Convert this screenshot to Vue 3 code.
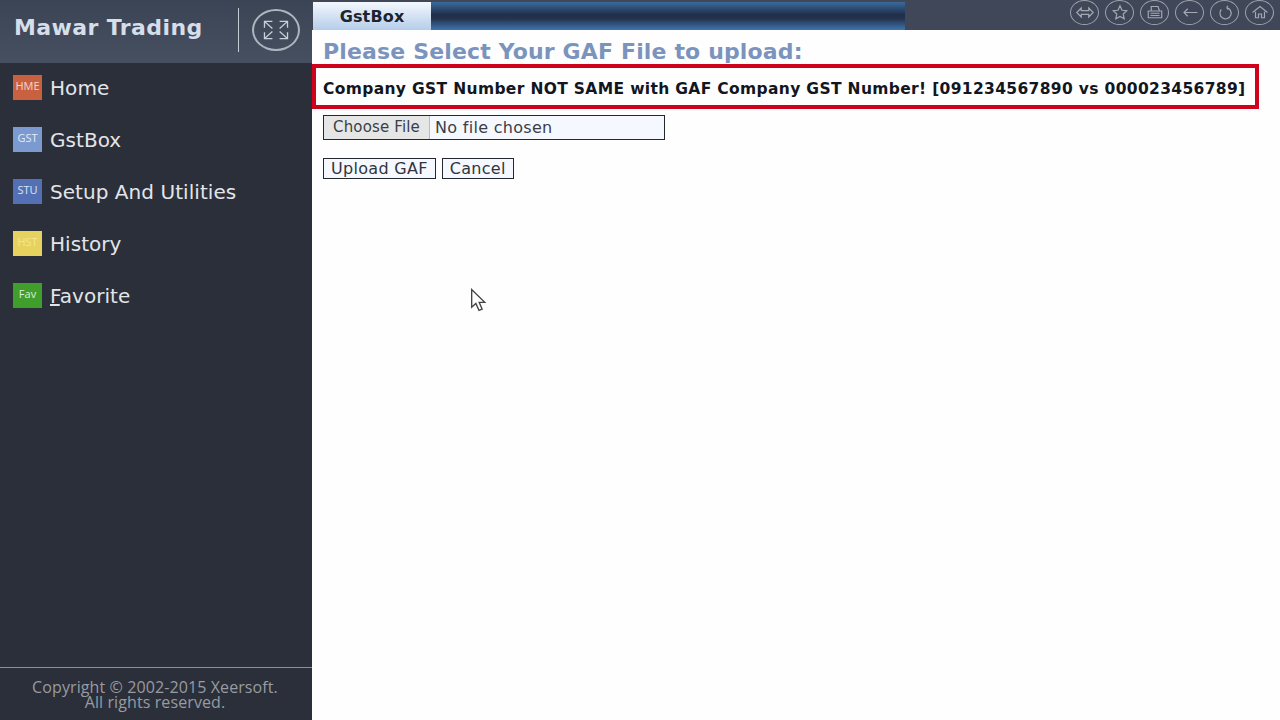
<script setup>
const menu = [
  { code: 'HME', label: 'Home', color: '#c9603f', ink: '#f0d9cf' },
  { code: 'GST', label: 'GstBox', color: '#7b9ad0', ink: '#e3eaf5' },
  { code: 'STU', label: 'Setup And Utilities', color: '#5470b4', ink: '#dfe5f2' },
  { code: 'HST', label: 'History', color: '#e8d25f', ink: '#f4e68f' },
  { code: 'Fav', label: 'avorite', first: 'F', color: '#3f9e2c', ink: '#dcefd8' },
]
</script>

<template>
  <div class="app">
    <aside class="side">
      <header class="brand">
        <h1 class="brand-name">Mawar Trading</h1>
        <span class="brand-rule"></span>
        <span class="expand">
          <svg viewBox="0 0 50 44" width="36" height="32" fill="none" stroke="#c9d0d9" stroke-width="1.800">
            <path d="M20 10H9V19M9 10L20 20M30 10H41V19M41 10L30 20M20 34H9V25M9 34L20 24M30 34H41V25M41 34L30 24" />
          </svg>
        </span>
      </header>
      <nav class="menu">
        <a v-for="m in menu" :key="m.code" class="item">
          <span class="code" :style="{ background: m.color, color: m.ink }">{{ m.code }}</span>
          <span class="label"><u v-if="m.first">{{ m.first }}</u>{{ m.label }}</span>
        </a>
      </nav>
      <footer class="copy">Copyright © 2002-2015 Xeersoft.<br />All rights reserved.</footer>
    </aside>

    <main class="main">
      <div class="top">
        <div class="tab">GstBox</div>
        <div class="strip"></div>
        <div class="tools">
          <span class="tool"><svg viewBox="0 0 28 28"><path d="M9 8L3 14L9 20V16.500H19V20L25 14L19 8V11.500H9Z" /></svg></span>
          <span class="tool"><svg viewBox="0 0 28 28"><path d="M14 5L16.700 11L23 11.700L18.300 16L19.600 22.500L14 19.200L8.400 22.500L9.700 16L5 11.700L11.300 11Z" /></svg></span>
          <span class="tool"><svg viewBox="0 0 28 28"><path d="M9 12V6H18L20 12M5 12H23V21H5ZM8 15H20M8 18H20" /></svg></span>
          <span class="tool"><svg viewBox="0 0 28 28"><path d="M6 14H24M11 9L6 14L11 19" /></svg></span>
          <span class="tool"><svg viewBox="0 0 28 28"><path d="M16 7.500A7.500 7.500 0 1 1 9 10M16 7.500L18 5M16 7.500L18.500 10" /></svg></span>
          <span class="tool"><svg viewBox="0 0 28 28"><path d="M4 14L14 6L24 14M8 13V21H12V16H16V21H20V13" /></svg></span>
        </div>
      </div>
      <section class="content">
        <h2 class="heading">Please Select Your GAF File to upload:</h2>
        <div class="error">Company GST Number NOT SAME with GAF Company GST Number! [091234567890 vs 000023456789]</div>
        <div class="file">
          <button class="choose">Choose File</button>
          <span class="none">No file chosen</span>
        </div>
        <div class="actions">
          <button class="btn">Upload GAF</button>
          <button class="btn">Cancel</button>
        </div>
      </section>
      <svg class="cursor" viewBox="0 0 18 24" width="19" height="25">
        <path d="M1.500 1.500V18.500L5.500 14.800L8.500 21.500L11.500 20.200L8.700 13.800H14Z" fill="#fff" stroke="#444" stroke-width="1.300" />
      </svg>
    </main>
  </div>
</template>

<style scoped>
.app {
  display: flex;
  width: 1280px;
  height: 720px;
  overflow: hidden;
  background: #fefefe;
  font-family: "DejaVu Sans", Verdana, sans-serif;
}
.side {
  width: 312px;
  flex: none;
  display: flex;
  flex-direction: column;
  background: #2b2f3a;
  color: #e4e6ea;
}
.brand {
  height: 63px;
  flex: none;
  display: flex;
  align-items: center;
  padding-left: 14px;
  box-sizing: border-box;
  background: linear-gradient(#3b4454, #465061);
}
.brand-name {
  margin: 0 0 9px;
  width: 224px;
  font-size: 22px;
  letter-spacing: 0.400px;
  font-weight: 700;
  color: #d6deea;
  white-space: nowrap;
}
.brand-rule {
  width: 1px;
  height: 44px;
  margin-bottom: 4px;
  background: #c5cbd3;
}
.expand {
  width: 48px;
  height: 42px;
  margin: 0 0 4px 13px;
  border: 2px solid #aeb5bf;
  border-radius: 50%;
  display: flex;
  align-items: center;
  justify-content: center;
  box-sizing: border-box;
}
.menu {
  flex: 1;
}
.item {
  height: 52px;
  display: flex;
  align-items: center;
  padding-left: 13px;
  gap: 8px;
}
.code {
  width: 29px;
  height: 25px;
  margin-bottom: 4px;
  display: flex;
  align-items: center;
  justify-content: center;
  padding-bottom: 3px;
  box-sizing: border-box;
  font-family: "Open Sans", sans-serif;
  font-size: 11px;
}
.label {
  margin-bottom: 2px;
  font-size: 20px;
  letter-spacing: 0.050px;
  color: #e3e5e8;
  white-space: nowrap;
}
.copy {
  height: 53px;
  flex: none;
  border-top: 1px solid #8b8f97;
  box-sizing: border-box;
  padding: 12px 2px 0 0;
  text-align: center;
  font-family: "Open Sans", sans-serif;
  font-size: 16px;
  letter-spacing: 0.100px;
  line-height: 15px;
  color: #989ba1;
}
.main {
  flex: 1;
  position: relative;
  min-width: 0;
}
.top {
  height: 30px;
  display: flex;
  align-items: flex-end;
  background: #3f4759;
  padding-left: 1px;
}
.tab {
  width: 118px;
  height: 28px;
  box-sizing: border-box;
  display: flex;
  align-items: center;
  justify-content: center;
  background: linear-gradient(#f4f8fd, #b5cdea);
  font-size: 16px;
  letter-spacing: 0.150px;
  font-weight: 700;
  color: #1c2430;
}
.strip {
  width: 474px;
  height: 28px;
  background: linear-gradient(#3a6a9c, #1f2f4a 45%, #24344f 60%, #3e74ae);
}
.tools {
  margin-left: auto;
  height: 30px;
  display: flex;
  gap: 6px;
  padding: 0 6px 0 0;
  box-sizing: border-box;
}
.tool {
  width: 29px;
  height: 25px;
  border: 1.500px solid #9da2ad;
  border-radius: 50%;
  box-sizing: border-box;
  display: flex;
  align-items: center;
  justify-content: center;
}
.tool svg {
  width: 22px;
  height: 21px;
  fill: none;
  stroke: #a3a8b2;
  stroke-width: 1.600;
}
.heading {
  margin: 9px 0 0 11px;
  font-size: 22px;
  letter-spacing: 0.150px;
  line-height: 26px;
  font-weight: 700;
  color: #7a94bd;
  white-space: nowrap;
}
.error {
  height: 45px;
  margin: -1px 21px 0 0;
  border: 4px solid #d0021b;
  box-sizing: border-box;
  padding: 4px 0 0 7px;
  display: flex;
  align-items: center;
  font-size: 15.500px;
  letter-spacing: 0.340px;
  font-weight: 700;
  color: #11161f;
  white-space: nowrap;
}
.file {
  width: 342px;
  height: 25px;
  margin: 6px 0 0 11px;
  border: 1px solid #23272e;
  box-sizing: border-box;
  display: flex;
  align-items: center;
  background: #f5f8fe;
  font-size: 16px;
  letter-spacing: 0.300px;
  color: #3a3f47;
}
.choose {
  height: 100%;
  width: 106px;
  padding: 0 0 1px;
  border: 0;
  border-right: 1px solid #bbb;
  background: #e6e6e6;
  font-family: inherit;
  font-size: 15px;
  letter-spacing: 0.150px;
  color: #3a3f47;
}
.none {
  margin: 0 0 1px 5px;
}
.actions {
  display: flex;
  gap: 6px;
  margin: 18px 0 0 11px;
}
.btn {
  height: 21px;
  padding: 0 7px;
  border: 1px solid #23272e;
  background: #f5f8fe;
  font-family: inherit;
  font-size: 16px;
  letter-spacing: 0.300px;
  color: #30353d;
}
.cursor {
  position: absolute;
  left: 158px;
  top: 288px;
}
</style>
